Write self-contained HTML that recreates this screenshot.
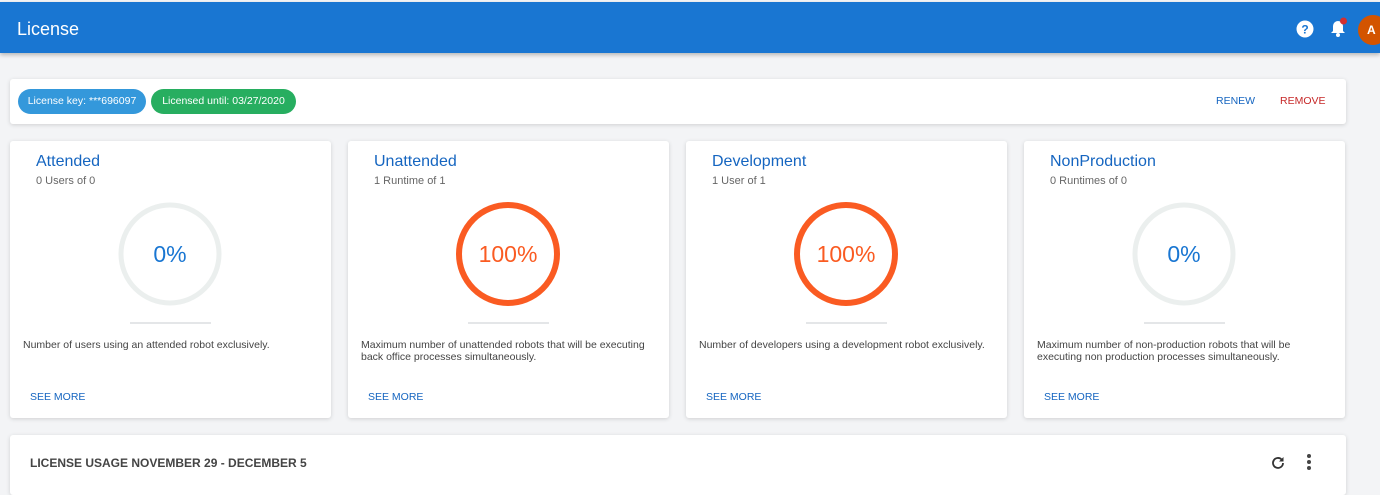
<!DOCTYPE html>
<html><head><meta charset="utf-8"><style>
*{box-sizing:border-box;margin:0;padding:0}
body{width:1380px;height:482px;overflow:hidden;background:#f3f4f6;font-family:"Liberation Sans",Arial,sans-serif;position:relative}
.hdr{position:absolute;left:0;top:2px;width:1380px;height:51px;background:#1976d2;box-shadow:0 2px 4px rgba(0,0,0,.25)}
.hdr .t{position:absolute;left:17px;top:17px;color:#fff;font-size:18px}
.card{position:absolute;background:#fff;border-radius:3px;box-shadow:0 1px 4px rgba(0,0,0,.15)}
.pill{position:absolute;top:89px;height:25px;border-radius:13px;color:#fff;font-size:10.5px;line-height:25px;padding:0;text-align:center;white-space:nowrap}
.btn{position:absolute;top:95px;font-size:10.5px}
.c h2{position:absolute;left:26px;top:12px;font-size:16px;font-weight:normal;color:#1565c0}
.c .s{position:absolute;left:26px;top:34px;font-size:11px;color:#666}
.c svg{position:absolute;left:107px;top:60px}
.c .p{position:absolute;left:107px;top:100px;width:104px;text-align:center;font-size:23px}
.c .ln{position:absolute;left:120px;top:181px;width:81px;height:2px;background:#e4e6e8}
.c .d{position:absolute;left:13px;top:198px;right:10px;font-size:10.5px;color:#444;line-height:12px}
.c .m{position:absolute;left:20px;top:250px;font-size:10.5px;color:#1565c0}
</style></head><body>
<div class="hdr"><div class="t">License</div>
<svg style="position:absolute;left:1296px;top:18px" width="18" height="18" viewBox="0 0 18 18"><circle cx="9" cy="9" r="8.5" fill="#fff"/><text x="9" y="13.5" text-anchor="middle" font-size="12" font-weight="bold" fill="#1976d2" font-family="Liberation Sans">?</text></svg>
<svg style="position:absolute;left:1329px;top:14px" width="20" height="22" viewBox="0 0 20 22"><path d="M4 15V10a5 5 0 0 1 10 0v5l2 2H2z" fill="#fff"/><circle cx="9" cy="19" r="2" fill="#fff"/><circle cx="14.5" cy="5" r="3.5" fill="#d32f2f"/></svg>
<div style="position:absolute;left:1358px;top:13px;width:30px;height:30px;border-radius:50%;background:#d35400;color:#fff;font-size:12px;font-weight:bold;line-height:30px;padding-left:9px">A</div>
</div>
<div class="card" style="left:10px;top:79px;width:1336px;height:45px"></div>
<div class="pill" style="left:18px;width:128px;background:#3498db">License key: ***696097</div>
<div class="pill" style="left:151px;width:145px;background:#27ae60">Licensed until: 03/27/2020</div>
<div class="btn" style="left:1216px;color:#1565c0">RENEW</div>
<div class="btn" style="left:1280px;color:#c62828">REMOVE</div>

<div class="card c" style="left:10px;top:141px;width:321px;height:277px">
<h2>Attended</h2><div class="s">0 Users of 0</div>
<svg width="106" height="106"><circle cx="53" cy="53" r="49" fill="none" stroke="#ebefee" stroke-width="5"/></svg>
<div class="p" style="color:#1976d2;left:108px">0%</div><div class="ln"></div>
<div class="d">Number of users using an attended robot exclusively.</div><div class="m">SEE MORE</div></div>

<div class="card c" style="left:348px;top:141px;width:321px;height:277px">
<h2>Unattended</h2><div class="s">1 Runtime of 1</div>
<svg width="106" height="106"><circle cx="53" cy="53" r="49" fill="none" stroke="#fa5b22" stroke-width="6"/></svg>
<div class="p" style="color:#fa5b22;left:108px">100%</div><div class="ln"></div>
<div class="d">Maximum number of unattended robots that will be executing back office processes simultaneously.</div><div class="m">SEE MORE</div></div>

<div class="card c" style="left:686px;top:141px;width:321px;height:277px">
<h2>Development</h2><div class="s">1 User of 1</div>
<svg width="106" height="106"><circle cx="53" cy="53" r="49" fill="none" stroke="#fa5b22" stroke-width="6"/></svg>
<div class="p" style="color:#fa5b22;left:108px">100%</div><div class="ln"></div>
<div class="d">Number of developers using a development robot exclusively.</div><div class="m">SEE MORE</div></div>

<div class="card c" style="left:1024px;top:141px;width:321px;height:277px">
<h2>NonProduction</h2><div class="s">0 Runtimes of 0</div>
<svg width="106" height="106"><circle cx="53" cy="53" r="49" fill="none" stroke="#ebefee" stroke-width="5"/></svg>
<div class="p" style="color:#1976d2;left:108px">0%</div><div class="ln"></div>
<div class="d">Maximum number of non-production robots that will be executing non production processes simultaneously.</div><div class="m">SEE MORE</div></div>

<div class="card" style="left:10px;top:435px;width:1336px;height:60px">
<div style="position:absolute;left:20px;top:21px;font-size:12px;color:#444;font-weight:bold">LICENSE USAGE NOVEMBER 29 - DECEMBER 5</div>
<svg style="position:absolute;left:1260px;top:20px" width="16" height="16" viewBox="0 0 16 16"><path d="M13 8a5 5 0 1 1-1.5-3.6" fill="none" stroke="#333" stroke-width="1.8"/><path d="M13.5 2v4.5H9z" fill="#333"/></svg>
<div style="position:absolute;left:1297px;top:19px;width:4px">
<div style="width:4px;height:4px;border-radius:50%;background:#444;margin-bottom:2px"></div>
<div style="width:4px;height:4px;border-radius:50%;background:#444;margin-bottom:2px"></div>
<div style="width:4px;height:4px;border-radius:50%;background:#444"></div></div>
</div>
</body></html>
